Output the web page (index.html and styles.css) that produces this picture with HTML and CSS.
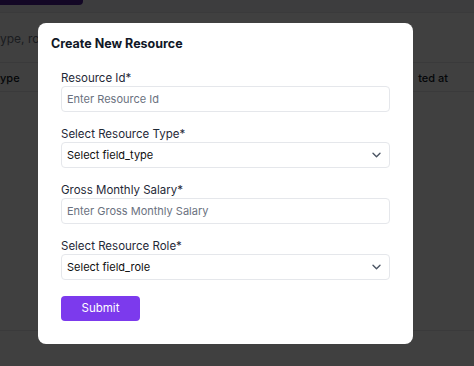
FILE: index.html
```html
<!DOCTYPE html>
<html lang="en">
<head>
  <meta charset="UTF-8">
  <title>Resources</title>
  <link rel="stylesheet" href="styles.css">
</head>
<body>
<div class="page">
  <header class="topbar">
    <span class="add-btn"></span>
  </header>
  <div class="search-row">
    <span class="search-text">ype, role</span>
  </div>
  <div class="table-head">
    <span>ype</span>
    <span>ted at</span>
  </div>
  <div class="table-body"></div>
  <div class="table-foot"></div>
</div>

<div class="overlay">
  <div class="modal">
    <h2>Create New Resource</h2>
    <form class="resource-form" onsubmit="event.preventDefault()">
      <div class="field">
        <label for="resource_id">Resource Id*</label>
        <input type="text" id="resource_id" placeholder="Enter Resource Id">
      </div>
      <div class="field">
        <label>Select Resource Type*</label>
        <div class="select-box">
          <span>Select field_type</span>
          <svg width="9" height="6" viewBox="0 0 9 6"><path d="M1 1.2l3.5 3.5 3.5-3.5" fill="none" stroke="#4b5563" stroke-width="1.4" stroke-linecap="round" stroke-linejoin="round"/></svg>
        </div>
      </div>
      <div class="field">
        <label for="salary">Gross Monthly Salary*</label>
        <input type="text" id="salary" placeholder="Enter Gross Monthly Salary">
      </div>
      <div class="field">
        <label>Select Resource Role*</label>
        <div class="select-box">
          <span>Select field_role</span>
          <svg width="9" height="6" viewBox="0 0 9 6"><path d="M1 1.2l3.5 3.5 3.5-3.5" fill="none" stroke="#4b5563" stroke-width="1.4" stroke-linecap="round" stroke-linejoin="round"/></svg>
        </div>
      </div>
      <button type="submit" class="submit-btn">Submit</button>
    </form>
  </div>
</div>
</body>
</html>
```

FILE: styles.css
```css
body {
  margin: 0;
  padding: 0;
  font-family: 'Inter', sans-serif;
  background-color: #ffffff;
  color: #111827;
}

.page {
  height: 366px;
  display: flex;
  flex-direction: column;
}

.topbar {
  height: 13px;
  border-bottom: 1px solid #e5e7eb;
  background-color: #f3f4f6;
  box-sizing: border-box;
}

.add-btn {
  display: block;
  width: 83px;
  height: 5px;
  background-color: #4c1d95;
  border-radius: 0 0 4px 0;
}

.search-row {
  height: 49px;
  display: flex;
  align-items: center;
  padding-top: 2px;
  box-sizing: border-box;
  font-size: 12px;
  color: #6b7280;
}

.table-head {
  height: 30px;
  border-top: 1px solid #e5e7eb;
  border-bottom: 1px solid #e5e7eb;
  display: flex;
  align-items: center;
  justify-content: space-between;
  padding: 2px 26px 0 0;
  font-size: 11px;
  font-weight: 500;
  color: #111827;
  box-sizing: border-box;
}

.table-body {
  flex: 1;
}

.table-foot {
  height: 35px;
  border-top: 1px solid #e5e7eb;
}

.overlay {
  position: fixed;
  inset: 0;
  background-color: rgba(0, 0, 0, 0.75);
  display: flex;
  align-items: center;
  padding-left: 38px;
}

.modal {
  width: 375px;
  height: 321px;
  box-sizing: border-box;
  background: #ffffff;
  border-radius: 8px;
  padding: 12px 23px 22px 13px;
}

.modal h2 {
  margin: 0 0 17px 0;
  font-size: 12.5px;
  font-weight: 700;
  line-height: 18px;
  color: #111827;
}

.resource-form {
  padding-left: 10px;
  display: flex;
  flex-direction: column;
  gap: 14px;
}

.field {
  display: flex;
  flex-direction: column;
}

label {
  font-size: 11.5px;
  line-height: 16px;
  color: #1f2937;
}

input[type="text"], .select-box {
  height: 26px;
  box-sizing: border-box;
  border: 1px solid #e5e7eb;
  border-radius: 4px;
  padding: 0 5px;
  font-family: 'Inter', sans-serif;
  font-size: 11px;
  color: #111827;
  outline: none;
}

input::placeholder {
  color: #6b7280;
}

.select-box {
  display: flex;
  align-items: center;
  justify-content: space-between;
  padding-right: 8px;
  color: #0f0f0f;
}

.submit-btn {
  align-self: flex-start;
  margin-top: 2px;
  width: 79px;
  height: 25px;
  background-color: #7c3aed;
  color: #ffffff;
  border: none;
  border-radius: 4px;
  font-family: 'Inter', sans-serif;
  font-size: 11.5px;
  font-weight: 400;
  cursor: pointer;
}
```
